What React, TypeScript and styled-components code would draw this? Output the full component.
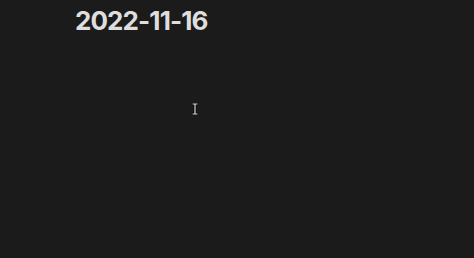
import React from "react";
import styled, { createGlobalStyle } from "styled-components";

const Global = createGlobalStyle`
  html, body { margin: 0; padding: 0; background: #1b1b1b; }
  #root { min-height: 258px; }
`;

const Page = styled.div`
  position: relative;
  width: 474px;
  height: 258px;
  background: #1b1b1b;
  box-sizing: border-box;
  padding: 5px 0 0 75px;
  font-family: Inter, "Liberation Sans", sans-serif;
`;

const Title = styled.h1`
  margin: 0;
  font-size: 26px;
  font-weight: 700;
  line-height: 32px;
  color: #dedede;
  letter-spacing: -0.9px;
`;

const Cursor = styled.svg`
  position: absolute;
  left: 191px;
  top: 103px;
`;

export default function App() {
  return (
    <>
      <Global />
      <Page>
        <Title>2022-11-16</Title>
        <Cursor width="8" height="12" viewBox="0 0 8 12">
          <path d="M1 1h6M4 1v10M1 11h6" stroke="#000" strokeWidth="2.6" fill="none" />
          <path d="M1.5 1h5M4 1v10M1.5 11h5" stroke="#ddd" strokeWidth="1.2" fill="none" />
        </Cursor>
      </Page>
    </>
  );
}
